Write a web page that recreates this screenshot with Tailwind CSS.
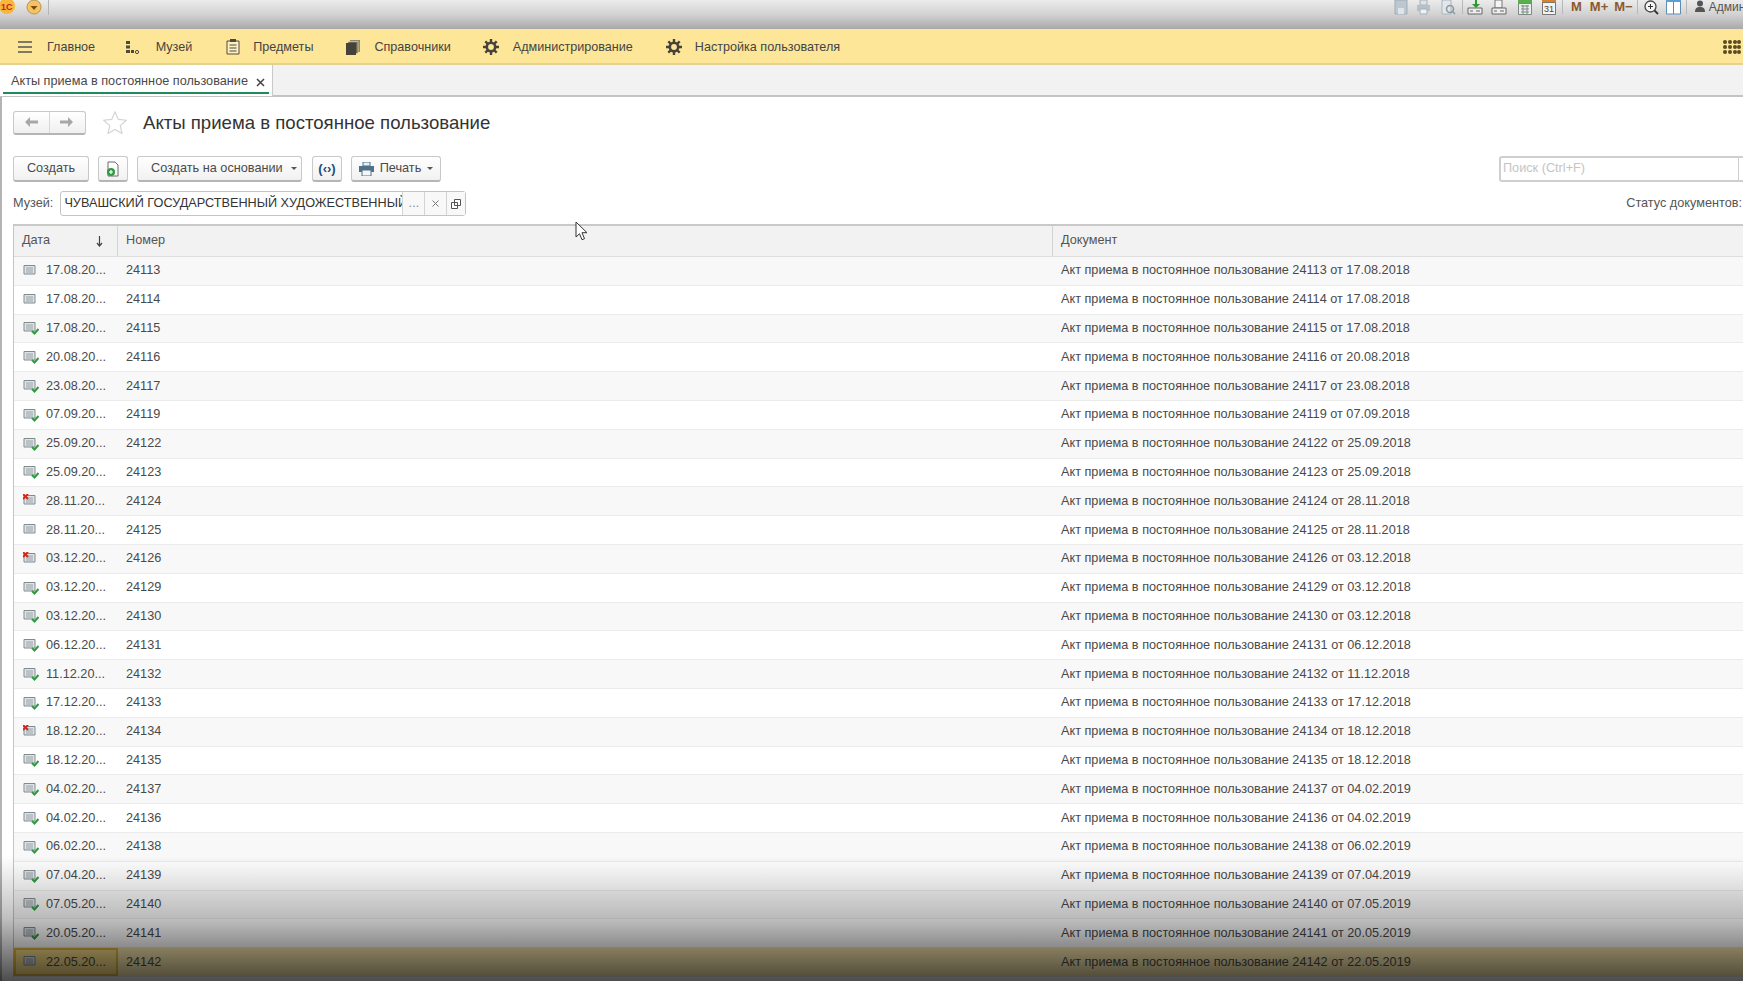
<!DOCTYPE html>
<html lang="ru">
  <head>
    <meta charset="UTF-8" />
    <title>Акты приема в постоянное пользование</title>
    <script src="https://cdn.jsdelivr.net/npm/@tailwindcss/browser@4"></script>
  </head>
  <body class="relative w-[1743px] h-[981px] overflow-hidden bg-white font-['Liberation_Sans',Arial,sans-serif] text-[12.7px] text-[#4a4a4a]">
    <!-- window bar -->
    <header class="h-[29px] bg-gradient-to-b from-[#ececec] via-[#d2d2d2] to-[#a9a9a9] flex items-start overflow-hidden">
      <svg class="w-[17px] h-[15px] shrink-0" viewBox="0 0 17 15"><circle cx="7" cy="6" r="8" fill="#f6b73c"/><text x="1" y="10" font-size="9" font-weight="bold" fill="#c8201a" font-family="Liberation Sans">1C</text></svg>
      <svg class="w-[16px] h-[16px] ml-[9px] shrink-0" viewBox="0 0 16 16"><circle cx="8" cy="7" r="7" fill="#f5c35f" stroke="#b9935a"/><path d="M4.5 6h7L8 10z" fill="#7a4a12"/></svg>
      <div class="w-px h-[15px] ml-[6px] bg-[#b5b5b5]"></div>
      <div class="ml-auto flex items-start h-[16px] w-[349px] shrink-0">
        <svg class="w-[14px] h-[15px] shrink-0" viewBox="0 0 14 15"><path d="M1 0h12v14H1z" fill="#bcc7cf" stroke="#9fadb7"/><path d="M4 8h6v6H4z" fill="#dfe4e8"/></svg>
        <svg class="w-[15px] h-[15px] ml-[8px] shrink-0" viewBox="0 0 15 15"><path d="M4 0h7v5H4z" fill="#dfe3e6" stroke="#a5b0b8"/><path d="M1 5h13v6H1z" fill="#b5c0c8"/><path d="M4 9h7v5H4z" fill="#eef0f2" stroke="#a5b0b8"/></svg>
        <svg class="w-[15px] h-[15px] ml-[10px] shrink-0" viewBox="0 0 15 15"><path d="M1 0h9v14H1z" fill="#e4e7ea" stroke="#aab4bb"/><circle cx="9" cy="9" r="3.5" fill="none" stroke="#8b99a3" stroke-width="1.6"/><path d="M11 11l3 3" stroke="#8b99a3" stroke-width="1.6"/></svg>
        <div class="w-px h-[14px] ml-[6px] bg-[#b8b8b8] shrink-0"></div>
        <svg class="w-[16px] h-[15px] ml-[4px] shrink-0" viewBox="0 0 16 15"><path d="M8 0v4H5l4 4 4-4h-3V0z" fill="#2c9a2c"/><path d="M1 8h14v6H1z" fill="#eee" stroke="#666"/><path d="M3 11h3M9 11h4" stroke="#666"/></svg>
        <svg class="w-[16px] h-[15px] ml-[8px] shrink-0" viewBox="0 0 16 15"><path d="M4 0h7v8H4z" fill="#f4f4f4" stroke="#777"/><path d="M1 8h14v6H1z" fill="#eee" stroke="#666"/><path d="M3 11h3M9 11h4" stroke="#666"/></svg>
        <svg class="w-[14px] h-[15px] ml-[11px] shrink-0" viewBox="0 0 14 15"><path d="M0 0h14v4H0z" fill="#57b04c"/><path d="M.5 3.5h13v11H.5z" fill="#e9eeec" stroke="#7b8a80"/><path d="M3 6h8M3 9h8M3 12h8M5 5v9M9 5v9" stroke="#7b8a80"/></svg>
        <svg class="w-[14px] h-[15px] ml-[10px] shrink-0" viewBox="0 0 14 15"><path d="M0 0h14v3H0z" fill="#d9822b"/><path d="M.5 2.5h13v12H.5z" fill="#f3f3f3" stroke="#777"/><text x="2" y="12" font-size="9" fill="#444" font-family="Liberation Sans">31</text></svg>
        <div class="w-px h-[14px] ml-[6px] bg-[#b8b8b8] shrink-0"></div>
        <span class="ml-[8px] text-[13px] leading-[14px] font-bold text-[#8a5a2e]">M</span>
        <span class="ml-[8px] text-[13px] leading-[14px] font-bold text-[#8a5a2e] whitespace-nowrap">M+</span>
        <span class="ml-[6px] text-[13px] leading-[14px] font-bold text-[#8a5a2e] whitespace-nowrap">M−</span>
        <div class="w-px h-[14px] ml-[4px] bg-[#b8b8b8] shrink-0"></div>
        <svg class="w-[15px] h-[15px] ml-[6px] shrink-0" viewBox="0 0 15 15"><circle cx="6.5" cy="6.5" r="5.5" fill="#f4f4f4" stroke="#444" stroke-width="1.3"/><path d="M4 6.5h5M6.5 4v5" stroke="#333"/><path d="M10.5 10.5L14 14" stroke="#333" stroke-width="1.8"/></svg>
        <svg class="w-[15px] h-[15px] ml-[7px] shrink-0" viewBox="0 0 15 15"><path d="M.5 0h14v14H.5z" fill="#fff" stroke="#5b8db3"/><path d="M0 0h15v2H0z" fill="#5b9fd0"/><path d="M7.5 2v12" stroke="#5b8db3"/></svg>
        <div class="w-px h-[14px] ml-[5px] bg-[#b8b8b8] shrink-0"></div>
        <svg class="w-[12px] h-[13px] ml-[7px] shrink-0" viewBox="0 0 12 13"><circle cx="6" cy="3.5" r="3" fill="#555"/><path d="M1 12c0-4 2-5 5-5s5 1 5 5z" fill="#555"/></svg>
        <span class="ml-[3px] text-[12px] leading-[14px] text-[#555] whitespace-nowrap">Админ</span>
      </div>
    </header>

    <!-- section panel -->
    <nav class="h-[36px] pt-[2px] bg-[#fde698] border-b-2 border-[#e4d390] flex items-center pl-[18px] pr-[2px] text-[12.6px] text-[#444]">
      <svg class="w-[14px] h-[12px]" viewBox="0 0 14 12"><path d="M0 1h14M0 6h14M0 11h14" stroke="#555" stroke-width="1.6"/></svg>
      <span class="ml-[15px]">Главное</span>
      <svg class="w-[15px] h-[15px] ml-[30.5px]" viewBox="0 0 15 15"><path d="M0 1h4v3H0zM0 5.500h4v3H0zM0 10h4v3H0zM5 10h3v3H5z" fill="#4f4a3a"/><circle cx="11" cy="12" r="1.600" fill="none" stroke="#4f4a3a"/></svg>
      <span class="ml-[15px]">Музей</span>
      <svg class="w-[14px] h-[16px] ml-[34px]" viewBox="0 0 14 16"><path d="M1 2h12v13H1z" fill="#fdf0c4" stroke="#4f4a3a"/><path d="M4 0h6v3H4z" fill="#4f4a3a"/><path d="M3.500 6h7M3.500 9h7M3.500 12h7" stroke="#4f4a3a"/></svg>
      <span class="ml-[13px]">Предметы</span>
      <svg class="w-[14px] h-[15px] ml-[33px]" viewBox="0 0 14 15"><path d="M4 0h10v12H4z" fill="#8d8876"/><path d="M2 1.500h10v12H2z" fill="#6b6757" stroke="#fde698" stroke-width=".6"/><path d="M0 3h10v12H0z" fill="#45423a"/></svg>
      <span class="ml-[14px]">Справочники</span>
      <svg class="w-[16px] h-[16px] ml-[32px]" viewBox="0 0 16 16"><circle cx="8" cy="8" r="4.200" fill="none" stroke="#45423a" stroke-width="2.600"/><path d="M8 0v3M8 13v3M0 8h3M13 8h3M2.300 2.300l2.200 2.200M11.500 11.500l2.200 2.200M2.300 13.700l2.200-2.200M11.500 4.500l2.200-2.200" stroke="#45423a" stroke-width="2.400"/></svg>
      <span class="ml-[14px]">Администрирование</span>
      <svg class="w-[16px] h-[16px] ml-[33px]" viewBox="0 0 16 16"><circle cx="8" cy="8" r="4.200" fill="none" stroke="#45423a" stroke-width="2.600"/><path d="M8 0v3M8 13v3M0 8h3M13 8h3M2.300 2.300l2.200 2.200M11.500 11.500l2.200 2.200M2.300 13.700l2.200-2.200M11.500 4.500l2.200-2.200" stroke="#45423a" stroke-width="2.400"/></svg>
      <span class="ml-[13px]">Настройка пользователя</span>
      <div class="ml-auto grid grid-cols-4 gap-[1px] w-[18px]">
        <i class="w-[4px] h-[4px] rounded-full bg-[#5c4a20]"></i><i class="w-[4px] h-[4px] rounded-full bg-[#5c4a20]"></i><i class="w-[4px] h-[4px] rounded-full bg-[#5c4a20]"></i><i class="w-[4px] h-[4px] rounded-full bg-[#5c4a20]"></i>
        <i class="w-[4px] h-[4px] rounded-full bg-[#5c4a20]"></i><i class="w-[4px] h-[4px] rounded-full bg-[#5c4a20]"></i><i class="w-[4px] h-[4px] rounded-full bg-[#5c4a20]"></i><i class="w-[4px] h-[4px] rounded-full bg-[#5c4a20]"></i>
        <i class="w-[4px] h-[4px] rounded-full bg-[#5c4a20]"></i><i class="w-[4px] h-[4px] rounded-full bg-[#5c4a20]"></i><i class="w-[4px] h-[4px] rounded-full bg-[#5c4a20]"></i><i class="w-[4px] h-[4px] rounded-full bg-[#5c4a20]"></i>
      </div>
    </nav>

    <!-- open tabs -->
    <div class="h-[32px] bg-[#f2f2f2] border-b-2 border-[#c4c4c4] flex">
      <div class="w-[273px] h-[31px] bg-white border-r border-[#c9c9c9] pl-[3px] pr-[3px]">
        <div class="h-[29px] pt-[7px] border-b-2 border-[#1f8a5b] flex items-center pl-[8px] pr-[4px] justify-between">
          <span>Акты приема в постоянное пользование</span>
          <svg class="w-[9px] h-[9px]" viewBox="0 0 9 9"><path d="M1 1l7 7M8 1L1 8" stroke="#444" stroke-width="1.500"/></svg>
        </div>
      </div>
    </div>

    <main class="border-l-[2px] border-[#b4b4b4] h-[884px]">
      <!-- title row -->
      <div class="h-[58px] flex items-center pl-[11px]">
        <div class="w-[73px] h-[24px] mt-[-7px] flex border border-[#c9c9c9] border-b-2 border-b-[#b5b5b5] rounded-[3px] bg-gradient-to-b from-white to-[#f0f0f0]">
          <div class="w-[36px] flex items-center justify-center border-r border-[#d8d8d8]"><svg class="w-[14px] h-[10px]" viewBox="0 0 14 10"><path d="M6 0L1 5l5 5V6.500h8v-3H6z" fill="#a8a8a8"/></svg></div>
          <div class="w-[36px] flex items-center justify-center"><svg class="w-[14px] h-[10px]" viewBox="0 0 14 10"><path d="M8 0l5 5-5 5V6.500H0v-3h8z" fill="#a8a8a8"/></svg></div>
        </div>
        <svg class="w-[24px] h-[23px] ml-[17px] mt-[-7px]" viewBox="0 0 24 23"><path d="M12 1l3.300 7.400 8 .8-6 5.400 1.700 7.900L12 18.500l-7 4 1.700-7.900-6-5.400 8-.8z" fill="none" stroke="#d4d4d4" stroke-width="1.200"/></svg>
        <h1 class="ml-[16px] mt-[-6px] text-[18.6px] leading-[24px] text-[#333]">Акты приема в постоянное пользование</h1>
      </div>

      <!-- command bar -->
      <div class="h-[26px] flex items-stretch pl-[11px] mt-[1px]">
        <button class="w-[76px] border border-[#c9c9c9] border-b-2 border-b-[#b5b5b5] rounded-[3px] bg-gradient-to-b from-white to-[#f1f1f1]">Создать</button>
        <button class="w-[30px] ml-[9px] flex items-center justify-center border border-[#c9c9c9] border-b-2 border-b-[#b5b5b5] rounded-[3px] bg-gradient-to-b from-white to-[#f1f1f1]"><svg class="w-[14px] h-[16px]" viewBox="0 0 14 16"><path d="M2 1h7l3 3v11H2z" fill="#fff" stroke="#6a6a6a"/><circle cx="5" cy="11" r="4" fill="#2f9a3f"/><path d="M3 11h4M5 9v4" stroke="#fff" stroke-width="1.200"/></svg></button>
        <button class="w-[165px] ml-[9px] flex items-center pl-[13px] gap-[8px] border border-[#c9c9c9] border-b-2 border-b-[#b5b5b5] rounded-[3px] bg-gradient-to-b from-white to-[#f1f1f1]">Создать на основании <svg class="w-[6px] h-[3px]" viewBox="0 0 6 3"><path d="M0 0h6L3 3z" fill="#555"/></svg></button>
        <button class="w-[30px] ml-[10px] flex items-center justify-center border border-[#c9c9c9] border-b-2 border-b-[#b5b5b5] rounded-[3px] bg-gradient-to-b from-white to-[#f1f1f1] text-[13px] font-bold text-[#1d4f78]">(‹›)</button>
        <button class="w-[90px] ml-[9px] flex items-center justify-center gap-[6px] border border-[#c9c9c9] border-b-2 border-b-[#b5b5b5] rounded-[3px] bg-gradient-to-b from-white to-[#f1f1f1]"><svg class="w-[15px] h-[14px]" viewBox="0 0 15 14"><path d="M4 0h7v4H4z" fill="#e8eef2" stroke="#4f7288"/><path d="M0 4h15v6H0z" fill="#4f7288"/><path d="M3 8h9v6H3z" fill="#f4f6f8" stroke="#4f7288"/></svg>Печать <svg class="w-[6px] h-[3px]" viewBox="0 0 6 3"><path d="M0 0h6L3 3z" fill="#555"/></svg></button>
        <div class="ml-auto w-[244px] flex border-2 border-r-0 border-[#cfcfcf] rounded-l-[3px]">
          <span class="w-[237px] flex items-center pl-[2px] text-[#c4c4c4]">Поиск (Ctrl+F)</span>
          <span class="border-l border-[#cfcfcf] flex-1"></span>
        </div>
      </div>

      <!-- filter row -->
      <div class="h-[25px] flex items-center pl-[11px] mt-[9px]">
        <span class="text-[#555]">Музей:</span>
        <div class="ml-[7px] h-[25px] w-[406px] flex border border-[#c4c4c4] rounded-[3px] text-[#333]">
          <span class="w-[341px] pl-[3px] flex items-center overflow-hidden whitespace-nowrap">ЧУВАШСКИЙ ГОСУДАРСТВЕННЫЙ ХУДОЖЕСТВЕННЫЙ</span>
          <span class="w-[22px] border-l border-[#d4d4d4] flex items-center justify-center text-[#888] bg-[#f8f8f8]">...</span>
          <span class="w-[22px] border-l border-[#d4d4d4] flex items-center justify-center bg-[#f8f8f8]"><svg class="w-[7px] h-[7px]" viewBox="0 0 7 7"><path d="M.5.5l6 6M6.500.5l-6 6" stroke="#777"/></svg></span>
          <span class="flex-1 border-l border-[#d4d4d4] flex items-center justify-center bg-[#f8f8f8]"><svg class="w-[10px] h-[10px]" viewBox="0 0 10 10"><path d="M3.500.5h6v6h-6zM.5 3.500h6v6h-6z" fill="#fff" stroke="#555"/></svg></span>
        </div>
        <span class="ml-auto pr-[1px] whitespace-nowrap text-[#555]">Статус документов:</span>
      </div>

      <!-- list -->
      <section class="ml-[11px] mt-[8px] border-l border-[#c4c4c4]">
        <div class="h-[33px] flex items-center bg-[#f2f2f2] border-t-2 border-[#c9c9c9] border-b border-b-[#dedede] text-[#555]">
          <div class="w-[104px] h-full flex items-center justify-between pl-[8px] pr-[14px] border-r border-[#d4d4d4]">
            <span>Дата</span>
            <svg class="w-[7px] h-[11px]" viewBox="0 0 7 11"><path d="M3.500 0v9M1 7l2.500 3L6 7" stroke="#444" fill="none" stroke-width="1.200"/></svg>
          </div>
          <div class="w-[935px] h-full flex items-center pl-[8px] border-r border-[#d4d4d4]">Номер</div>
          <div class="pl-[8px]">Документ</div>
        </div>
        <div id="rows"></div>
      </section>
    </main>

    <!-- mouse pointer -->
    <svg class="absolute left-[575px] top-[221px] w-[13px] h-[20px]" viewBox="0 0 13 20"><path d="M1 1v15l3.500-3.300 2.500 6 2.500-1-2.500-6h5z" fill="#fff" stroke="#333"/></svg>
    <!-- fade over the bottom of the list -->
    <div class="absolute left-0 right-0 bottom-0 h-[125px] pointer-events-none bg-gradient-to-b from-black/0 via-black/25 to-black/70"></div>

    <script>
      const rows = [
        ["17.08.20", "24113", "17.08.2018", "n"], ["17.08.20", "24114", "17.08.2018", "n"], ["17.08.20", "24115", "17.08.2018", "p"],
        ["20.08.20", "24116", "20.08.2018", "p"], ["23.08.20", "24117", "23.08.2018", "p"], ["07.09.20", "24119", "07.09.2018", "p"],
        ["25.09.20", "24122", "25.09.2018", "p"], ["25.09.20", "24123", "25.09.2018", "p"], ["28.11.20", "24124", "28.11.2018", "d"],
        ["28.11.20", "24125", "28.11.2018", "n"], ["03.12.20", "24126", "03.12.2018", "d"], ["03.12.20", "24129", "03.12.2018", "p"],
        ["03.12.20", "24130", "03.12.2018", "p"], ["06.12.20", "24131", "06.12.2018", "p"], ["11.12.20", "24132", "11.12.2018", "p"],
        ["17.12.20", "24133", "17.12.2018", "p"], ["18.12.20", "24134", "18.12.2018", "d"], ["18.12.20", "24135", "18.12.2018", "p"],
        ["04.02.20", "24137", "04.02.2019", "p"], ["04.02.20", "24136", "04.02.2019", "p"], ["06.02.20", "24138", "06.02.2019", "p"],
        ["07.04.20", "24139", "07.04.2019", "p"], ["07.05.20", "24140", "07.05.2019", "p"], ["20.05.20", "24141", "20.05.2019", "p"],
        ["22.05.20", "24142", "22.05.2019", "n"],
      ];
      const doc = '<path d="M1 1.500h11v8.500H1z" fill="#dfe3e6" stroke="#808b91"/><path d="M3 4h7M3 6h7M3 8h7" stroke="#98a2a7"/>';
      const marks = {
        n: "",
        p: '<path d="M9 10l2.500 2.500L15.500 8" fill="none" stroke="#2f9a3f" stroke-width="2"/>',
        d: '<path d="M0 0l5 5M5 0L0 5" stroke="#d4261c" stroke-width="2"/>',
      };
      document.getElementById("rows").innerHTML = rows.map((r, i) => {
        const last = i === rows.length - 1;
        const rowClass = last ? "bg-[#fbeab0]" : i % 2 ? "bg-white" : "bg-[#f8f8f8]";
        const dateClass = last ? "border-2 border-[#e2b93a] bg-[#fbe08a] pl-[7px]" : "pl-[9px]";
        return `<div class="h-[28.8px] flex items-center border-b border-[#ebebeb] ${rowClass}">
          <div class="w-[104px] h-full flex items-center ${dateClass}">
            <svg class="w-[16px] h-[14px] shrink-0" viewBox="0 0 16 14">${doc}${marks[r[3]]}</svg>
            <span class="ml-[7px] whitespace-nowrap">${r[0]}...</span>
          </div>
          <div class="w-[935px] pl-[8px]">${r[1]}</div>
          <div class="pl-[8px] whitespace-nowrap">Акт приема в постоянное пользование ${r[1]} от ${r[2]}</div>
        </div>`;
      }).join("");
    </script>
  </body>
</html>
